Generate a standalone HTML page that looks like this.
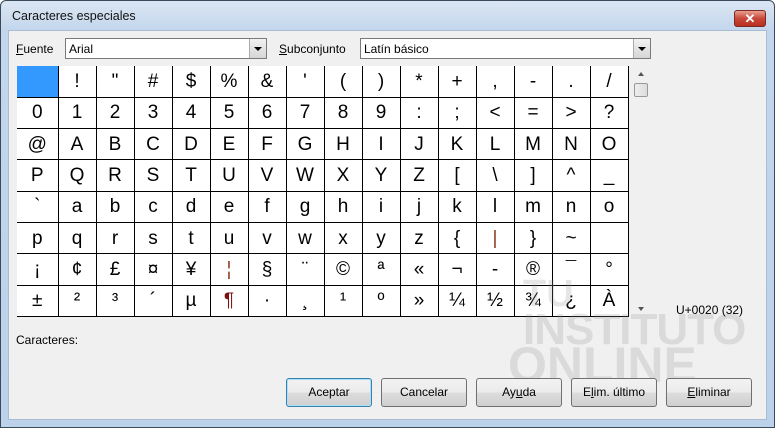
<!DOCTYPE html>
<html><head><meta charset="utf-8"><style>
*{margin:0;padding:0;box-sizing:border-box}
body{width:775px;height:428px;overflow:hidden;background:#fff;font-family:"Liberation Sans",sans-serif;position:relative}
.frame{position:absolute;left:0;top:0;width:775px;height:428px;border:1px solid #3b4a5a;border-radius:6px 6px 0 0;background:linear-gradient(#dbe6f3,#c3d6ec 30px,#bcd2ea);}
.title{position:absolute;left:12px;top:9px;color:#111;font-family:"Liberation Sans",sans-serif;font-size:12.5px}
.close{position:absolute;left:734px;top:10px;width:32px;height:17px;border:1px solid #7a2a22;border-radius:3px;background:linear-gradient(#e8a090,#c8483a 50%,#b83020);color:#fff;font-size:13px;font-weight:bold;text-align:center;line-height:15px}
.client{position:absolute;left:8px;top:30px;width:759px;height:390px;background:#f0f0f0;border:1px solid #a9bcd4}
.lbl{position:absolute;font-size:12px;color:#000;font-family:"Liberation Sans",sans-serif}
.combo{position:absolute;height:21px;background:#fff;border:1px solid #7a7a7a;font-size:12px;padding:3px 3px;font-family:"Liberation Sans",sans-serif}
.combo .arr{position:absolute;right:0;top:0;width:17px;height:19px;background:linear-gradient(#f2f2f2,#d6d6d6);border-left:1px solid #aaa}
.combo .arr:after{content:"";position:absolute;left:4px;top:8px;border-left:4px solid transparent;border-right:4px solid transparent;border-top:4px solid #000}
table{position:absolute;left:17px;top:66px;border-collapse:collapse;background:#fff}
td{width:38px;height:31.3px;border:1px solid #000;text-align:center;font-size:19px;color:#000;padding:0;line-height:29px}
td.sel{background:#3399ff}
tr td:first-child{width:41px;border-left:none}
tr:first-child td{border-top:none}
.sb{position:absolute;left:633px;top:66px;width:17px;height:250px;background:#f0f0f0}
.btn{position:absolute;top:378px;width:86px;height:29px;border:1px solid #707070;border-radius:3px;background:linear-gradient(#f2f2f2,#ebebeb 50%,#dddddd 51%,#cfcfcf);font-size:12px;text-align:center;line-height:27px;font-family:"Liberation Sans",sans-serif}
.wm{position:absolute;color:rgba(140,140,140,0.22);font-weight:bold;font-family:"Liberation Sans",sans-serif;line-height:1}
</style></head><body>
<div class="frame"></div>
<div class="title">Caracteres especiales</div>
<div class="close">✕</div>
<div class="client"></div>
<div class="lbl" style="left:16px;top:42px"><u>F</u>uente</div>
<div class="combo" style="left:65px;top:38px;width:202px">Arial<div class="arr"></div></div>
<div class="lbl" style="left:279px;top:42px"><u>S</u>ubconjunto</div>
<div class="combo" style="left:360px;top:38px;width:291px">Latín básico<div class="arr"></div></div>
<table>
<tr><td class="sel"></td><td>!</td><td>"</td><td>#</td><td>$</td><td>%</td><td>&amp;</td><td>'</td><td>(</td><td>)</td><td>*</td><td>+</td><td>,</td><td>-</td><td>.</td><td>/</td></tr>
<tr><td>0</td><td>1</td><td>2</td><td>3</td><td>4</td><td>5</td><td>6</td><td>7</td><td>8</td><td>9</td><td>:</td><td>;</td><td>&lt;</td><td>=</td><td>&gt;</td><td>?</td></tr>
<tr><td>@</td><td>A</td><td>B</td><td>C</td><td>D</td><td>E</td><td>F</td><td>G</td><td>H</td><td>I</td><td>J</td><td>K</td><td>L</td><td>M</td><td>N</td><td>O</td></tr>
<tr><td>P</td><td>Q</td><td>R</td><td>S</td><td>T</td><td>U</td><td>V</td><td>W</td><td>X</td><td>Y</td><td>Z</td><td>[</td><td>\</td><td>]</td><td>^</td><td>_</td></tr>
<tr><td>`</td><td>a</td><td>b</td><td>c</td><td>d</td><td>e</td><td>f</td><td>g</td><td>h</td><td>i</td><td>j</td><td>k</td><td>l</td><td>m</td><td>n</td><td>o</td></tr>
<tr><td>p</td><td>q</td><td>r</td><td>s</td><td>t</td><td>u</td><td>v</td><td>w</td><td>x</td><td>y</td><td>z</td><td>{</td><td style="color:#8b3a1a">|</td><td>}</td><td>~</td><td></td></tr>
<tr><td>¡</td><td>¢</td><td>£</td><td>¤</td><td>¥</td><td style="color:#8b3a1a">¦</td><td>§</td><td>¨</td><td>©</td><td>ª</td><td>«</td><td>¬</td><td>-</td><td>®</td><td>¯</td><td>°</td></tr>
<tr><td>±</td><td>²</td><td>³</td><td>´</td><td>µ</td><td style="color:#7a1010">¶</td><td>·</td><td>¸</td><td>¹</td><td>º</td><td>»</td><td>¼</td><td>½</td><td>¾</td><td>¿</td><td>À</td></tr>
</table>
<div class="sb"><div style="position:absolute;left:5px;top:6px;border-left:3px solid transparent;border-right:3px solid transparent;border-bottom:4px solid #555"></div>
<div style="position:absolute;left:1px;top:17px;width:14px;height:14px;border:1px solid #999;border-radius:2px;background:linear-gradient(90deg,#eee,#ddd)"></div>
<div style="position:absolute;left:5px;top:241px;border-left:3px solid transparent;border-right:3px solid transparent;border-top:4px solid #555"></div></div>
<div class="wm" style="left:523px;top:275px;font-size:38px">TU</div>
<div class="wm" style="left:523px;top:308px;font-size:44px;letter-spacing:-1px">INSTITUTO</div>
<div class="wm" style="left:508px;top:340px;font-size:50px">ONLINE</div>
<div class="lbl" style="left:676px;top:303px">U+0020 (32)</div>
<div class="lbl" style="left:16px;top:333px">Caracteres:</div>
<div class="btn" style="left:286px;border-color:#3c7fb1;box-shadow:inset 0 0 0 1px #a8e0f8">Aceptar</div>
<div class="btn" style="left:381px">Cancelar</div>
<div class="btn" style="left:476px">Ay<u>u</u>da</div>
<div class="btn" style="left:571px">E<u>l</u>im. último</div>
<div class="btn" style="left:666px"><u>E</u>liminar</div>
</body></html>
